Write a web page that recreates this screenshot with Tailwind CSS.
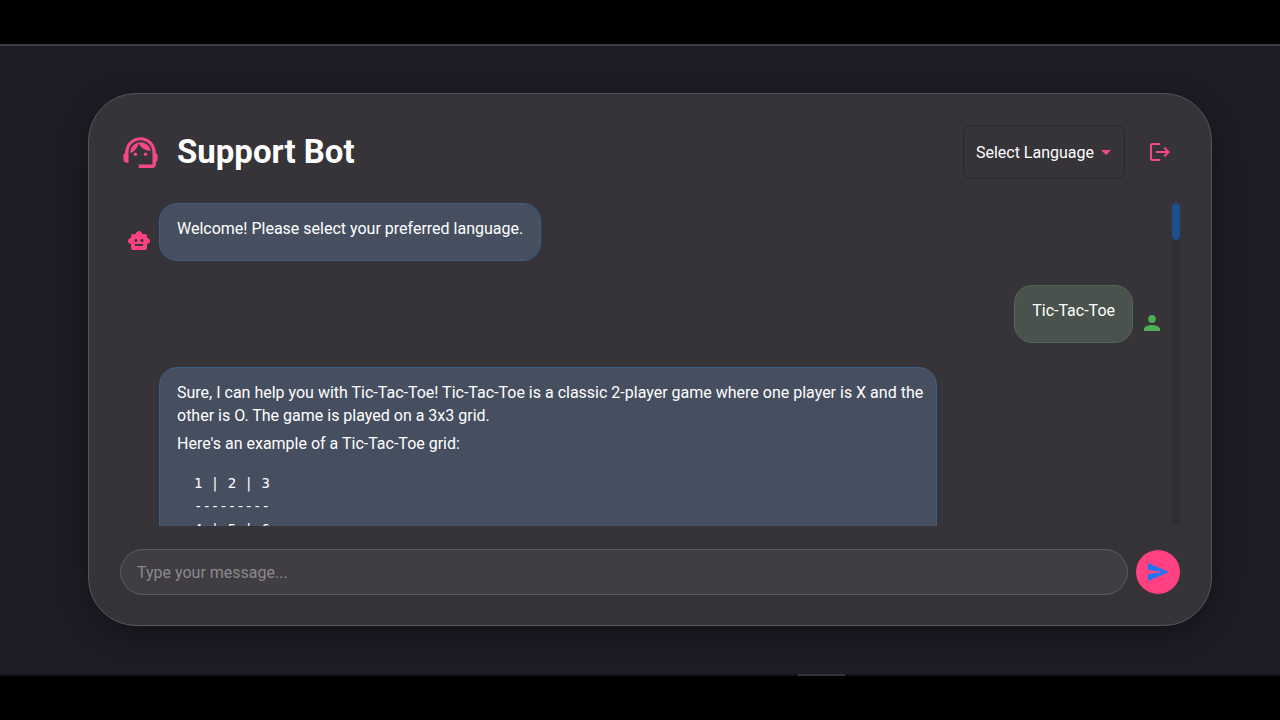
<!DOCTYPE html>
<html lang="en">
<head>
    <meta charset="UTF-8">
    <meta name="viewport" content="width=device-width, initial-scale=1.0">
    <title>Support Bot</title>
    <script src="https://cdn.jsdelivr.net/npm/@tailwindcss/browser@4"></script>
</head>
<body class="bg-black h-screen py-11 flex flex-col font-[Roboto,sans-serif] text-base/[23px] text-white">
    <main class="relative flex-1 min-h-0 flex border-t-2 border-b-2 border-t-[#3f3c42] border-b-[#131217] bg-[#1f1c26] pt-[47px] pb-12 pl-[88px] pr-[68px]">
        <div class="flex-1 min-w-0 flex flex-col rounded-[48px] border border-[#57545a] bg-[#363339] px-[31px] pt-[31px] pb-[30px] shadow-[0_8px_32px_rgba(0,0,0,0.4)]">

            <!-- Header -->
            <header class="flex items-center justify-between">
                <div class="flex items-center gap-4">
                    <svg class="size-[41px] text-[#f44983]" viewBox="0 0 24 24" fill="currentColor" aria-hidden="true">
                        <path d="M21 12.22C21 6.73 16.74 3 12 3c-4.69 0-9 3.65-9 9.28-.6.34-1 .98-1 1.72v2c0 1.1.9 2 2 2h1v-6.1c0-3.87 3.13-7 7-7s7 3.13 7 7V19h-8v2h8c1.1 0 2-.9 2-2v-1.22c.59-.31 1-.92 1-1.64v-2.3c0-.7-.41-1.31-1-1.62z"/>
                        <circle cx="9" cy="13" r="1"/>
                        <circle cx="15" cy="13" r="1"/>
                        <path d="M18 11.03C17.52 8.18 15.04 6 12.05 6c-3.03 0-6.29 2.51-6.03 6.45 2.47-1.01 4.33-3.21 4.86-5.89 1.31 2.63 4 4.44 7.12 4.47z"/>
                    </svg>
                    <h1 class="text-[33px]/10 font-bold">Support Bot</h1>
                </div>
                <div class="flex items-center gap-[15px]">
                    <button type="button" class="h-[54px] pl-3 pr-2 flex items-center gap-0.5 rounded-lg border border-[#2a282d]">
                        Select Language
                        <svg class="size-5 text-[#f44983]" viewBox="0 0 24 24" fill="currentColor" aria-hidden="true"><path d="M6 9.5l6 6 6-6z"/></svg>
                    </button>
                    <button type="button" aria-label="Log out" class="size-10 grid place-items-center text-[#f44983]">
                        <svg class="size-6" viewBox="0 0 24 24" fill="currentColor" aria-hidden="true">
                            <path d="M17 7l-1.41 1.41L18.17 11H8v2h10.17l-2.58 2.58L17 17l5-5zM4 5h8V3H4c-1.1 0-2 .9-2 2v14c0 1.1.9 2 2 2h8v-2H4V5z"/>
                        </svg>
                    </button>
                </div>
            </header>

            <!-- Messages -->
            <div class="flex-1 min-h-0 flex mt-6 mb-[23px]">
                <div class="flex-1 overflow-hidden flex flex-col gap-6 pl-[7px] pr-2">
                    <div class="flex items-end shrink-0">
                        <svg class="size-6 mr-2 mb-2 text-[#ff4081]" viewBox="0 0 24 24" fill="currentColor" aria-hidden="true">
                            <path d="M20 9V7c0-1.1-.9-2-2-2h-3c0-1.66-1.34-3-3-3S9 3.34 9 5H6c-1.1 0-2 .9-2 2v2c-1.66 0-3 1.34-3 3s1.34 3 3 3v4c0 1.1.9 2 2 2h12c1.1 0 2-.9 2-2v-4c1.66 0 3-1.34 3-3s-1.34-3-3-3zM7.5 11.5c0-.83.67-1.5 1.5-1.5s1.5.67 1.5 1.5S9.830 13 9 13s-1.5-.67-1.5-1.5zM16 17H8v-2h8v2zm-1-4c-.83 0-1.5-.67-1.5-1.5S14.170 10 15 10s1.5.67 1.5 1.5S15.830 13 15 13z"/>
                        </svg>
                        <div class="rounded-[18px] border border-[#3b5d86] bg-[#464f5f] px-[17px] pt-[13px] pb-[15px]">
                            <p class="mb-[5px]">Welcome! Please select your preferred language.</p>
                        </div>
                    </div>
                    <div class="flex items-end justify-end shrink-0">
                        <div class="rounded-[18px] border border-[#536556] bg-[#49524c] px-[17px] pt-[13px] pb-[15px]">
                            <p class="mb-[5px]">Tic-Tac-Toe</p>
                        </div>
                        <svg class="size-6 ml-[7px] mb-2 text-[#4caf50]" viewBox="0 0 24 24" fill="currentColor" aria-hidden="true">
                            <path d="M12 12c2.21 0 4-1.79 4-4s-1.79-4-4-4-4 1.79-4 4 1.79 4 4 4zm0 2c-2.67 0-8 1.34-8 4v2h16v-2c0-2.66-5.33-4-8-4z"/>
                        </svg>
                    </div>
                    <div class="flex items-end shrink-0 pl-8">
                        <div class="max-w-[778px] rounded-[18px] border border-[#3b5d86] bg-[#464f5f] pl-[17px] pr-3 pt-[13px] pb-[15px]">
                            <p class="mb-[5px]">Sure, I can help you with Tic-Tac-Toe! Tic-Tac-Toe is a classic 2-player game where one player is X and the other is O. The game is played on a 3x3 grid.</p>
                            <p class="mb-[5px]">Here's an example of a Tic-Tac-Toe grid:</p>
<pre class="px-[17px] py-3 font-['DejaVu_Sans_Mono',monospace] text-sm/[23px]">
1 | 2 | 3
---------
4 | 5 | 6
---------
7 | 8 | 9</pre>
                        </div>
                    </div>
                </div>
                <!-- Scrollbar -->
                <div class="w-2 rounded-full bg-[#302d33]">
                    <div class="h-[37px] rounded-full bg-[#1f4e8c]"></div>
                </div>
            </div>

            <!-- Input -->
            <form class="flex items-center gap-2">
                <input type="text" aria-label="Message" placeholder="Type your message..." class="flex-1 min-w-0 h-[46px] rounded-full border border-[#5d5a60] bg-[#403d43] px-4 placeholder:text-[#8b898e] outline-none">
                <button type="submit" aria-label="Send" class="size-11 grid place-items-center rounded-full bg-[#ff4081] text-[#1f75f5]">
                    <svg class="size-6" viewBox="0 0 24 24" fill="currentColor" aria-hidden="true"><path d="M2.01 21 23 12 2.01 3 2 10l15 2-15 2z"/></svg>
                </button>
            </form>
        </div>

        <!-- Drag handle at the bottom edge -->
        <div class="absolute -bottom-0.5 left-[798px] w-[47px] h-0.5 bg-[#363539]"></div>
    </main>
</body>
</html>
